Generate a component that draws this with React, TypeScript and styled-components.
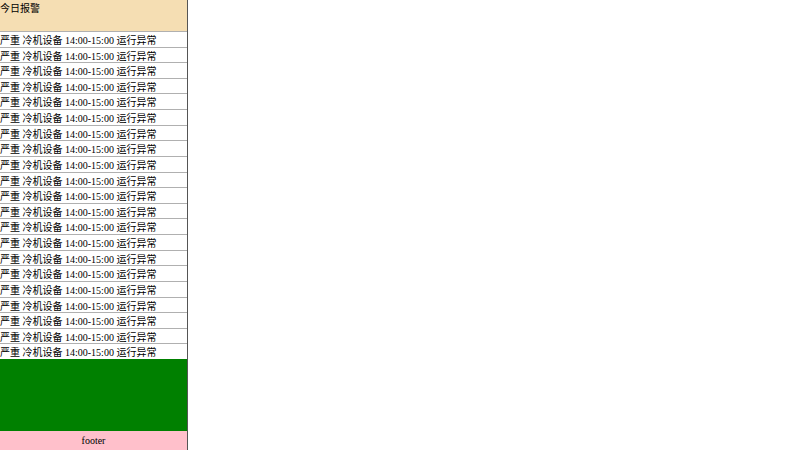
import * as React from 'react';
import styled, { createGlobalStyle } from 'styled-components';

const GlobalStyle = createGlobalStyle`
    body {
        margin: 0;
        background: #fff;
        color: #000;
        font-family: 'Liberation Serif', 'Noto Sans CJK SC', serif;
        font-size: 10px;
        line-height: 17px;
    }
`;

const Sidebar = styled.aside`
    display: flex;
    flex-direction: column;
    box-sizing: border-box;
    width: 188px;
    height: 100vh;
    border-right: 1px solid #555;
`;

const Header = styled.header`
    flex: none;
    height: 31px;
    background: wheat;
`;

const Content = styled.main`
    flex: 1;
    min-height: 0;
    overflow: hidden;
    background: green;
`;

const AlarmList = styled.ul`
    display: grid;
    grid-auto-rows: minmax(0, 1fr);
    height: 328px;
    margin: 0;
    padding: 0;
    list-style: none;
    background: #fff;
`;

const AlarmRow = styled.li`
    border-top: 1px solid #b0b0b0;
    white-space: nowrap;
`;

const Footer = styled.footer`
    flex: none;
    height: 19px;
    line-height: 19px;
    background: pink;
    text-align: center;
`;

interface Alarm {
    id: number;
    level: string;
    device: string;
    time: string;
    message: string;
}

const alarms: Alarm[] = Array.from({ length: 21 }, (_, id) => ({
    id,
    level: '严重',
    device: '冷机设备',
    time: '14:00-15:00',
    message: '运行异常',
}));

export default class App extends React.Component {
    public render(): React.ReactNode {
        return (
            <>
                <GlobalStyle />
                <Sidebar>
                    <Header>今日报警</Header>
                    <Content>
                        <AlarmList>
                            {alarms.map(x => (
                                <AlarmRow key={x.id}>
                                    {`${x.level} ${x.device} ${x.time} ${x.message}`}
                                </AlarmRow>
                            ))}
                        </AlarmList>
                    </Content>
                    <Footer>footer</Footer>
                </Sidebar>
            </>
        );
    }
}
